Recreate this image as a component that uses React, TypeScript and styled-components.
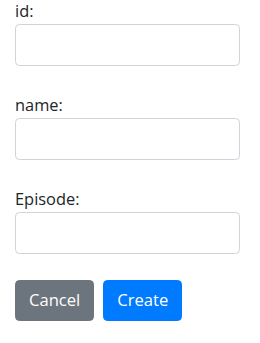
import styled, { createGlobalStyle } from "styled-components"

const GlobalStyle = createGlobalStyle`
body {
  margin: 0;
  background: #fff;
  font-family: "Open Sans", "Liberation Sans", sans-serif;
  font-size: 16.4px;
  line-height: 1.5;
  color: #212529;
}
* { box-sizing: border-box; }
`;

const fields = ["id", "name", "Episode"]

const App = () => {
    return (
        <div>
            <GlobalStyle />
            <Container>
                <form onSubmit={(e) => e.preventDefault()}>
                    {fields.map((f) => (
                        <FormGroup key={f}>
                            <Label htmlFor={f}>{f}:</Label>
                            <Input id={f} type="text" />
                        </FormGroup>
                    ))}
                    <ButtonHolder>
                        <Button type="button" variant="secondary">Cancel</Button>
                        <Button type="submit" variant="primary">Create</Button>
                    </ButtonHolder>
                </form>
            </Container>
        </div>
    )
}

export default App


const Button = styled.button<{ variant: "primary" | "secondary" }>`
height: 41px;
padding: 0 13px;
border: 1px solid ${(p) => (p.variant === "primary" ? "#007bff" : "#6c757d")};
background: ${(p) => (p.variant === "primary" ? "#007bff" : "#6c757d")};
color: #fff;
border-radius: 4.4px;
font-family: inherit;
font-size: 16.6px;
line-height: 1.5;
cursor: pointer;
`;
const ButtonHolder = styled.div`
display: flex;
gap: 9px;
margin-top: 1px;
`;
const Input = styled.input`
display: block;
width: 225px;
height: 42px;
padding: 6.6px 13.2px;
border: 1px solid #ced4da;
border-radius: 4.4px;
font-family: inherit;
font-size: 16.4px;
color: #495057;
background: #fff;
`;
const Label = styled.label`
display: block;
line-height: 26px;
`;
const FormGroup = styled.div`
margin-bottom: 26px;
`;
const Container = styled.div`
padding: 0 15px;
margin-top: -2px;
`;
